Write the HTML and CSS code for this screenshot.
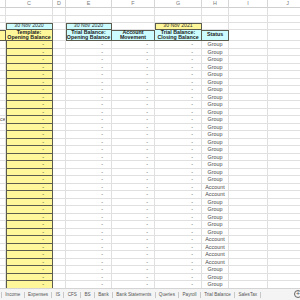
FILE: index.html
```html
<!DOCTYPE html>
<html>
<head>
  <meta charset="utf-8">
  <title>Trial Balance</title>
  <link rel="stylesheet" href="styles.css">
</head>
<body>
  <div class="sheet">
    <div class="grid" id="grid">
      <div class="row colhdr">
        <div></div><div>C</div><div>D</div><div>E</div><div>F</div><div>G</div><div>H</div><div>I</div><div>J</div>
      </div>
      <div class="row"><div></div><div></div><div></div><div></div><div></div><div></div><div></div><div></div><div></div></div>
      <div class="row"><div></div><div></div><div></div><div></div><div></div><div></div><div></div><div></div><div></div></div>
      <div class="row date">
        <div></div>
        <div class="cyan box">30 Nov 2020</div>
        <div></div>
        <div class="cyan box">30 Nov 2020</div>
        <div></div>
        <div class="yellow box">30 Nov 2021</div>
        <div></div><div></div><div></div>
      </div>
      <div class="row head">
        <div class="yellow b-start"></div>
        <div class="yellow dark"><span>Template:</span><span>Opening Balance</span></div>
        <div></div>
        <div class="cyan dark edge-l"><span>Trial Balance:</span><span>Opening Balance</span></div>
        <div class="cyan dark edge-t"><span>Account</span><span>Movement</span></div>
        <div class="cyan dark"><span>Trial Balance:</span><span>Closing Balance</span></div>
        <div class="cyan dark edge-t"><span>Status</span></div>
        <div></div><div></div>
      </div>
    </div>
    <div class="tabs">
      <div class="tab">Income</div>
      <div class="tab">Expenses</div>
      <div class="tab">IS</div>
      <div class="tab">CFS</div>
      <div class="tab">BS</div>
      <div class="tab">Bank</div>
      <div class="tab">Bank Statements</div>
      <div class="tab">Queries</div>
      <div class="tab">Payroll</div>
      <div class="tab">Trial Balance</div>
      <div class="tab">SalesTax</div>
      <div class="add">+</div>
    </div>
  </div>
  <script>
    // status column, top to bottom
    const status = [];
    for (let i = 1; i <= 33; i++) {
      if ((i >= 20 && i <= 21) || (i >= 27 && i <= 30)) status.push("Account");
      else status.push("Group");
    }
    const grid = document.getElementById("grid");
    status.forEach(function (s, i) {
      const row = document.createElement("div");
      row.className = "row data";
      const b = i == 10 ? "ce" : "";
      row.innerHTML =
        '<div class="cut">' + b + '</div>' +
        '<div class="yellow dark edge-l num">-</div>' +
        '<div></div>' +
        '<div class="num">-</div>' +
        '<div class="num f">-</div>' +
        '<div class="num">-</div>' +
        '<div class="status">' + s + '</div>' +
        '<div></div><div></div>';
      grid.appendChild(row);
    });
  </script>
</body>
</html>
```

FILE: styles.css
```css
body {
  margin: 0;
  background: #fff;
  font-family: "Liberation Sans", Arial, sans-serif;
}
.sheet {
  width: 300px;
  height: 300px;
  overflow: hidden;
  display: flex;
  flex-direction: column;
}
.grid {
  height: 288px;
  overflow: hidden;
  flex: none;
}
.row {
  display: grid;
  grid-template-columns: 6px 47px 13px 46px 43px 47px 27px 39px 40px;
  height: 7.5px;
}
.row > div {
  box-sizing: border-box;
  border-right: 1px solid #e0e0e0;
  border-bottom: 1px solid #e0e0e0;
  font-size: 5.4px;
  line-height: 6.5px;
  color: #4a4a4a;
  white-space: nowrap;
  overflow: hidden;
}
.colhdr { height: 8px; }
.colhdr > div {
  text-align: center;
  color: #7a7a7a;
  line-height: 7px;
  border-bottom-color: #cfcfcf;
  border-right-color: #d6d6d6;
}
.date { height: 6.5px; }
.date > div {
  text-align: center;
  line-height: 5.5px;
  font-size: 5.2px;
  color: #333;
}
.head { height: 11.5px; }
.head > div {
  display: flex;
  flex-direction: column;
  justify-content: center;
  align-items: center;
  font-weight: bold;
  line-height: 5.1px;
  font-size: 5.3px;
  color: #222;
}
.yellow { background: #fff799; }
.cyan { background: #ccfcff; }
.box, .dark, .b-start {
  border-right-color: #5b5b4e !important;
  border-bottom-color: #5b5b4e !important;
}
.box { box-shadow: inset 1px 1px 0 #5b5b4e; }
.edge-l { box-shadow: inset 1px 0 0 #5b5b4e; }
.edge-t { box-shadow: inset 0 1px 0 #5b5b4e; }
.b-start { box-shadow: inset 0 1px 0 #5b5b4e; }
.num {
  text-align: right;
  padding-right: 8px;
}
.num.f { padding-right: 6px; }
.data .yellow { color: #333; }
.status {
  text-align: center;
  color: #555;
}
.cut {
  text-align: right;
  font-size: 5px;
}
.tabs {
  flex: 1;
  display: flex;
  align-items: center;
  background: #f4f4f4;
  border-top: 1px solid #d4d4d4;
  position: relative;
  padding-left: 1px;
}
.tab {
  font-size: 4.6px;
  color: #555;
  padding: 0 3.3px;
  line-height: 6px;
  border-left: 1px solid #c8c8c8;
  white-space: nowrap;
}
.tab:nth-last-child(2) { border-right: 1px solid #c8c8c8; }
.add {
  position: absolute;
  left: 294px;
  top: 1px;
  width: 8px;
  height: 8px;
  box-sizing: border-box;
  border: 1px solid #666;
  border-radius: 50%;
  font-size: 7px;
  line-height: 6px;
  text-align: center;
  color: #555;
}
```
